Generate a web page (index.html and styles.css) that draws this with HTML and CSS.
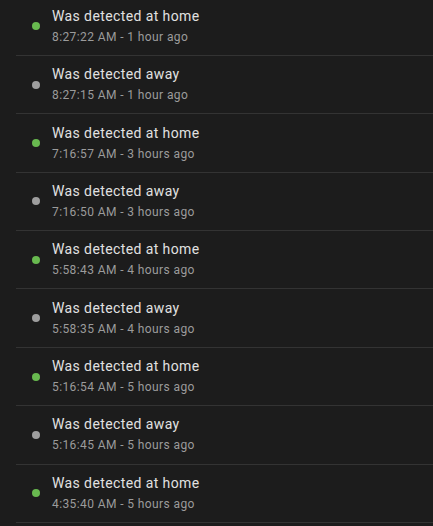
FILE: index.html
```html
<!DOCTYPE html>
<html lang="en">
<head>
  <meta charset="UTF-8">
  <title>Logbook</title>
  <link rel="stylesheet" href="styles.css">
</head>
<body>
  <div class="logbook">
    <div class="entry">
      <span class="dot home"></span>
      <div class="entry-text">
        <div class="entry-title">Was detected at home</div>
        <div class="entry-time">8:27:22 AM - 1 hour ago</div>
      </div>
    </div>
    <div class="entry">
      <span class="dot away"></span>
      <div class="entry-text">
        <div class="entry-title">Was detected away</div>
        <div class="entry-time">8:27:15 AM - 1 hour ago</div>
      </div>
    </div>
    <div class="entry">
      <span class="dot home"></span>
      <div class="entry-text">
        <div class="entry-title">Was detected at home</div>
        <div class="entry-time">7:16:57 AM - 3 hours ago</div>
      </div>
    </div>
    <div class="entry">
      <span class="dot away"></span>
      <div class="entry-text">
        <div class="entry-title">Was detected away</div>
        <div class="entry-time">7:16:50 AM - 3 hours ago</div>
      </div>
    </div>
    <div class="entry">
      <span class="dot home"></span>
      <div class="entry-text">
        <div class="entry-title">Was detected at home</div>
        <div class="entry-time">5:58:43 AM - 4 hours ago</div>
      </div>
    </div>
    <div class="entry">
      <span class="dot away"></span>
      <div class="entry-text">
        <div class="entry-title">Was detected away</div>
        <div class="entry-time">5:58:35 AM - 4 hours ago</div>
      </div>
    </div>
    <div class="entry">
      <span class="dot home"></span>
      <div class="entry-text">
        <div class="entry-title">Was detected at home</div>
        <div class="entry-time">5:16:54 AM - 5 hours ago</div>
      </div>
    </div>
    <div class="entry">
      <span class="dot away"></span>
      <div class="entry-text">
        <div class="entry-title">Was detected away</div>
        <div class="entry-time">5:16:45 AM - 5 hours ago</div>
      </div>
    </div>
    <div class="entry">
      <span class="dot home"></span>
      <div class="entry-text">
        <div class="entry-title">Was detected at home</div>
        <div class="entry-time">4:35:40 AM - 5 hours ago</div>
      </div>
    </div>
  </div>
</body>
</html>
```

FILE: styles.css
```css
html, body {
  margin: 0;
  background-color: #1c1c1c;
  font-family: Roboto, "Noto Sans", sans-serif;
  overflow: hidden;
}
.logbook {
  margin-top: -2.4px;
  padding-left: 16px;
}
.entry {
  box-sizing: border-box;
  height: 58.375px;
  display: flex;
  align-items: center;
  gap: 12px;
  padding-left: 16px;
  border-bottom: 1px solid #333333;
}
.dot {
  width: 8px;
  height: 8px;
  border-radius: 50%;
  flex-shrink: 0;
}
.dot.home {
  background-color: #68b94f;
}
.dot.away {
  background-color: #9e9e9e;
}
.entry-title {
  font-size: 14px;
  line-height: 20px;
  color: #e1e1e1;
  letter-spacing: 0.4px;
}
.entry-time {
  font-size: 12px;
  line-height: 20px;
  margin-top: 1px;
  color: #9b9b9b;
  letter-spacing: 0.4px;
}
```
